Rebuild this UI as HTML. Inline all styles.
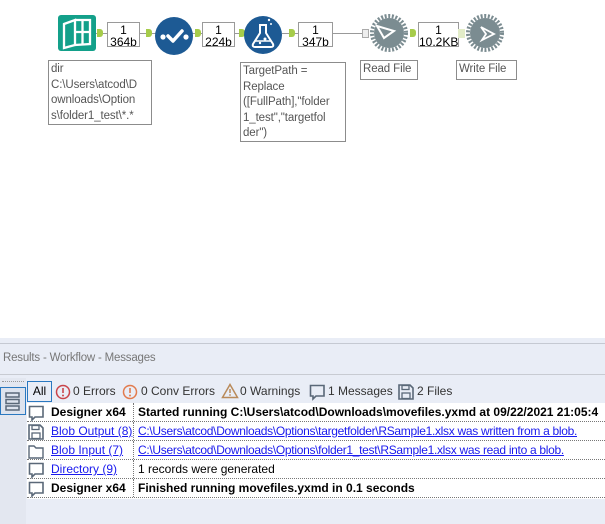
<!DOCTYPE html>
<html><head><style>
*{margin:0;padding:0;box-sizing:border-box}
body{width:605px;height:524px;overflow:hidden;background:#fff;font-family:"Liberation Sans",sans-serif;position:relative}
.a{position:absolute}
.cnt{position:absolute;border:1px solid #9a9a9a;background:#fff;font-size:12px;line-height:12px;text-align:center;color:#000;padding-top:1px}
.ann{position:absolute;border:1px solid #8c8c8c;background:#fff;font-size:11.5px;line-height:15.5px;color:#555;padding:1px 2px;letter-spacing:-0.1px}
.ln{position:absolute;height:1px;background:#999}
.an{position:absolute;width:6px;height:8px;background:#a6cc4a;border-radius:0 3px 3px 0}
.row{position:absolute;left:27px;right:0;height:19px;border-bottom:1px dotted #777;font-size:12px;line-height:18px;white-space:nowrap}
.c1{position:absolute;left:24px;width:82px}
.c2{position:absolute;left:106px;border-left:1px dotted #777;padding-left:4px;height:18px}
.lk{color:#1a1aee;text-decoration:underline;letter-spacing:-0.3px}
b{font-weight:bold}
.tb{position:absolute;top:382px;font-size:12px;color:#333;line-height:18px}
</style></head><body>
<div class="ln" style="left:96px;top:33px;width:12px"></div>
<div class="an" style="left:97px;top:29px"></div>
<div class="cnt" style="left:107px;top:22px;width:33px;height:25px">1<br>364b</div>
<div class="ln" style="left:140px;top:33px;width:16px"></div>
<div class="an" style="left:146px;top:29px"></div>
<div class="ln" style="left:192px;top:33px;width:10px"></div>
<div class="an" style="left:195px;top:29px"></div>
<div class="cnt" style="left:202px;top:22px;width:33px;height:25px">1<br>224b</div>
<div class="ln" style="left:235px;top:33px;width:10px"></div>
<div class="an" style="left:239px;top:29px"></div>
<div class="ln" style="left:282px;top:33px;width:16px"></div>
<div class="an" style="left:289px;top:29px"></div>
<div class="cnt" style="left:298px;top:22px;width:35px;height:25px">1<br>347b</div>
<div class="ln" style="left:333px;top:33px;width:32px"></div>
<div class="a" style="left:362px;top:29px;width:7px;height:9px;border:1px solid #aaa;background:#eee"></div>
<div class="an" style="left:410px;top:29px"></div>
<div class="cnt" style="left:418px;top:22px;width:41px;height:25px">1<br>10.2KB</div>
<div class="a" style="left:458px;top:29px;width:7px;height:9px;background:#e2ecc8"></div>

<svg class="a" style="left:58px;top:15px" width="38" height="36" viewBox="0 0 38 36">
<rect x="0" y="0" width="38" height="36" rx="3" fill="#13a08a"/>
<path d="M6 9 L17 5 L17 30 L6 33 Z" fill="none" stroke="#fff" stroke-width="2.3"/>
<path d="M17 5 L32 5 L32 29 L17 30" fill="none" stroke="#fff" stroke-width="2.3"/>
<path d="M24.5 6 V29 M18 17 H31" stroke="#fff" stroke-width="2.3"/>
</svg>
<svg class="a" style="left:155px;top:17px" width="38" height="38"><circle cx="19" cy="19" r="19" fill="#1d5a94"/>
<circle cx="8" cy="20" r="2.6" fill="#fff"/><circle cx="31" cy="20" r="2.6" fill="#fff"/>
<path d="M13 19 L18 24 L27 14" fill="none" stroke="#fff" stroke-width="3.5" stroke-linecap="round" stroke-linejoin="round"/></svg>
<svg class="a" style="left:243px;top:14px" width="40" height="40"><circle cx="20" cy="21" r="19" fill="#1d5a94"/>
<path d="M16 11 H24 M17 11 V19 L10 30 Q9 33 12 33 H28 Q31 33 30 30 L23 19 V11" fill="none" stroke="#fff" stroke-width="2"/>
<path d="M12 27 H28" stroke="#fff" stroke-width="1.5"/>
<circle cx="22" cy="25" r="1.5" fill="#fff"/><circle cx="17" cy="29" r="1.2" fill="#fff"/><circle cx="26" cy="6" r="1.2" fill="#fff"/><circle cx="28" cy="10" r="1" fill="#fff"/></svg>
<svg class="a" style="left:370px;top:14px" width="38" height="38"><circle cx="19" cy="19" r="15" fill="#7b8c91"/>
<circle cx="19" cy="19" r="17" fill="none" stroke="#7b8c91" stroke-width="4" stroke-dasharray="2 1.6"/>
<path d="M7 12 L24 17 L14 24 Z" fill="none" stroke="#fff" stroke-width="2"/></svg>
<svg class="a" style="left:466px;top:14px" width="38" height="38"><circle cx="19" cy="19" r="15" fill="#7b8c91"/>
<circle cx="19" cy="19" r="17" fill="none" stroke="#7b8c91" stroke-width="4" stroke-dasharray="2 1.6"/>
<path d="M15 13 L28 20 L16 26 L20 20 Z" fill="none" stroke="#fff" stroke-width="1.8"/></svg>

<div class="ann" style="left:48px;top:60px;width:104px;height:65px">dir<br>C:\Users\atcod\D<br>ownloads\Option<br>s\folder1_test\*.*</div>
<div class="ann" style="left:240px;top:62px;width:106px;height:80px">TargetPath =<br>Replace<br>([FullPath],"folder<br>1_test","targetfol<br>der")</div>
<div class="ann" style="left:360px;top:60px;width:58px;height:20px">Read File</div>
<div class="ann" style="left:456px;top:60px;width:61px;height:20px">Write File</div>

<div class="a" style="left:0;top:338px;width:605px;height:186px;background:#e9edf6"></div>
<div class="a" style="left:0;top:343px;width:605px;height:1px;background:#c5c9d2"></div>
<div class="a" style="left:3px;top:352px;font-size:11.5px;color:#777;letter-spacing:-0.2px">Results - Workflow - Messages</div>
<div class="a" style="left:0;top:374px;width:605px;height:1px;background:#c8cbd2"></div>
<div class="a" style="left:0;top:378px;width:26px;height:146px;background:#e3e7f0"></div>
<div class="a" style="left:2px;top:381px;width:22px;height:2px;border-top:1px dotted #999"></div>
<div class="a" style="left:0;top:387px;width:26px;height:28px;border:1px solid #2a78c0;background:#dde3ee"></div>
<svg class="a" style="left:5px;top:392px" width="16" height="20"><g fill="none" stroke="#5a6878" stroke-width="1.5"><rect x="1" y="1" width="13" height="4"/><rect x="1" y="7.5" width="13" height="4"/><rect x="1" y="14" width="13" height="4"/></g></svg>
<div class="a" style="left:27px;top:381px;width:25px;height:21px;border:1px solid #2a78c0;font-size:12px;line-height:19px;text-align:center;color:#000">All</div>
<svg class="a" style="left:55px;top:384px" width="16" height="16"><circle cx="8" cy="8" r="6.5" fill="none" stroke="#c9444a" stroke-width="1.5"/><path d="M8 4v5" stroke="#c9444a" stroke-width="1.6"/><circle cx="8" cy="11.5" r="1" fill="#c9444a"/></svg>
<div class="tb" style="left:73px">0 Errors</div>
<svg class="a" style="left:122px;top:384px" width="16" height="16"><circle cx="8" cy="8" r="6.5" fill="none" stroke="#e27b4e" stroke-width="1.5"/><path d="M8 4v5" stroke="#e27b4e" stroke-width="1.6"/><circle cx="8" cy="11.5" r="1" fill="#e27b4e"/></svg>
<div class="tb" style="left:141px">0 Conv Errors</div>
<svg class="a" style="left:221px;top:383px" width="18" height="16"><path d="M9 1.5 L16.5 14.5 H1.5 Z" fill="none" stroke="#b98a5a" stroke-width="1.5"/><path d="M9 6v4" stroke="#b98a5a" stroke-width="1.5"/><circle cx="9" cy="12" r=".9" fill="#b98a5a"/></svg>
<div class="tb" style="left:240px">0 Warnings</div>
<svg class="a" style="left:309px;top:384px" width="17" height="17"><path d="M1.5 1.5 H15 V12 H7 L4 15 V12 H1.5 Z" fill="none" stroke="#5a6878" stroke-width="1.6"/></svg>
<div class="tb" style="left:328px">1 Messages</div>
<svg class="a" style="left:398px;top:384px" width="16" height="16"><path d="M1 1 H12 L15 4 V15 H1 Z" fill="none" stroke="#5a6878" stroke-width="1.6"/><rect x="4" y="1.5" width="7" height="4" fill="none" stroke="#5a6878" stroke-width="1.3"/><rect x="4" y="9" width="8" height="5.5" fill="none" stroke="#5a6878" stroke-width="1.3"/></svg>
<div class="tb" style="left:417px">2 Files</div>

<div class="a" style="left:27px;top:403px;width:578px;height:96px;background:#fff"></div>
<div class="row" style="top:403px"><svg class="a" style="left:1px;top:2px" width="17" height="17"><path d="M1.5 1.5 H15 V12 H7 L4 15 V12 H1.5 Z" fill="none" stroke="#5a6878" stroke-width="1.6"/></svg><div class="c1"><b>Designer x64</b></div><div class="c2"><b>Started running C:\Users\atcod\Downloads\movefiles.yxmd at 09/22/2021 21:05:4</b></div></div>
<div class="row" style="top:422px"><svg class="a" style="left:1px;top:2px" width="16" height="16"><path d="M1 1 H12 L15 4 V15 H1 Z" fill="none" stroke="#5a6878" stroke-width="1.6"/><rect x="4" y="1.5" width="7" height="4" fill="none" stroke="#5a6878" stroke-width="1.3"/><rect x="4" y="9" width="8" height="5.5" fill="none" stroke="#5a6878" stroke-width="1.3"/></svg><div class="c1 lk" style="letter-spacing:0">Blob Output (8)</div><div class="c2"><span class="lk">C:\Users\atcod\Downloads\Options\targetfolder\RSample1.xlsx was written from a blob.</span></div></div>
<div class="row" style="top:441px"><svg class="a" style="left:1px;top:3px" width="16" height="15"><path d="M1 2 H6 L8 4 H15 V14 H1 Z" fill="none" stroke="#5a6878" stroke-width="1.4"/></svg><div class="c1 lk" style="letter-spacing:0">Blob Input (7)</div><div class="c2"><span class="lk">C:\Users\atcod\Downloads\Options\folder1_test\RSample1.xlsx was read into a blob.</span></div></div>
<div class="row" style="top:460px"><svg class="a" style="left:1px;top:2px" width="17" height="17"><path d="M1.5 1.5 H15 V12 H7 L4 15 V12 H1.5 Z" fill="none" stroke="#5a6878" stroke-width="1.6"/></svg><div class="c1 lk" style="letter-spacing:0">Directory (9)</div><div class="c2">1 records were generated</div></div>
<div class="row" style="top:479px"><svg class="a" style="left:1px;top:2px" width="17" height="17"><path d="M1.5 1.5 H15 V12 H7 L4 15 V12 H1.5 Z" fill="none" stroke="#5a6878" stroke-width="1.6"/></svg><div class="c1"><b>Designer x64</b></div><div class="c2"><b>Finished running movefiles.yxmd in 0.1 seconds</b></div></div>
</body></html>
